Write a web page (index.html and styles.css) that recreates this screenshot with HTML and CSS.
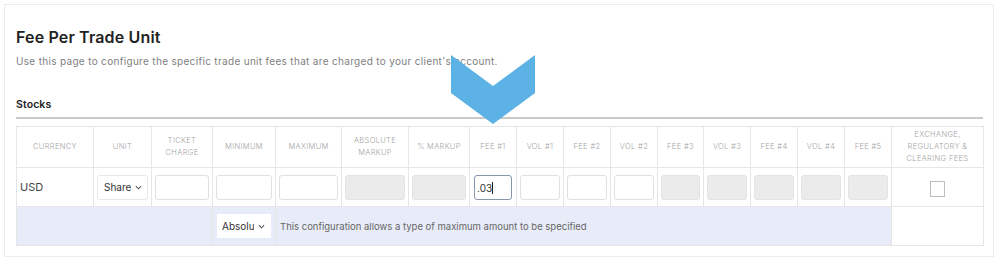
FILE: index.html
```html
<!DOCTYPE html>
<html lang="en">
<head>
<meta charset="UTF-8" />
<meta name="viewport" content="width=device-width, initial-scale=1" />
<title>Fee Per Trade Unit</title>
<link rel="stylesheet" href="styles.css">
</head>
<body>

<div class="card">
  <h1 class="page-title">Fee Per Trade Unit</h1>
  <p class="page-desc">Use this page to configure the specific trade unit fees that are charged to your client's account.</p>

  <h2 class="section-title">Stocks</h2>

  <table class="fee-table">
    <colgroup>
      <col style="width:77px"><col style="width:58px"><col style="width:61px"><col style="width:63px">
      <col style="width:66px"><col style="width:67px"><col style="width:61px"><col style="width:47px">
      <col style="width:47px"><col style="width:47px"><col style="width:47px"><col style="width:46px">
      <col style="width:47px"><col style="width:47px"><col style="width:47px"><col style="width:47px">
      <col style="width:92px">
    </colgroup>
    <thead>
      <tr>
        <th>Currency</th>
        <th>Unit</th>
        <th>Ticket<br>Charge</th>
        <th>Minimum</th>
        <th>Maximum</th>
        <th>Absolute<br>Markup</th>
        <th>% Markup</th>
        <th>Fee #1</th>
        <th>Vol #1</th>
        <th>Fee #2</th>
        <th>Vol #2</th>
        <th>Fee #3</th>
        <th>Vol #3</th>
        <th>Fee #4</th>
        <th>Vol #4</th>
        <th>Fee #5</th>
        <th>Exchange,<br>Regulatory &amp;<br>Clearing Fees</th>
      </tr>
    </thead>
    <tbody>
      <tr class="fee-row">
        <td class="currency">USD</td>
        <td>
          <div class="select-wrap">
            <select class="field select"><option>Share</option></select>
            <svg class="caret" viewBox="0 0 8 5" width="7" height="5"><path d="M1 1l3 3 3-3" fill="none" stroke="#555" stroke-width="1.2"/></svg>
          </div>
        </td>
        <td><input class="field" type="text"></td>
        <td><input class="field" type="text"></td>
        <td><input class="field" type="text"></td>
        <td><input class="field" type="text" disabled></td>
        <td><input class="field" type="text" disabled></td>
        <td><div class="field focused">.03<span class="cursor"></span></div></td>
        <td><input class="field" type="text"></td>
        <td><input class="field" type="text"></td>
        <td><input class="field" type="text"></td>
        <td><input class="field" type="text" disabled></td>
        <td><input class="field" type="text" disabled></td>
        <td><input class="field" type="text" disabled></td>
        <td><input class="field" type="text" disabled></td>
        <td><input class="field" type="text" disabled></td>
        <td><span class="checkbox"></span></td>
      </tr>
      <tr class="config-row">
        <td colspan="3"></td>
        <td>
          <div class="select-wrap">
            <select class="field select plain"><option>Absolute</option></select>
            <svg class="caret" viewBox="0 0 8 5" width="7" height="5"><path d="M1 1l3 3 3-3" fill="none" stroke="#555" stroke-width="1.2"/></svg>
          </div>
        </td>
        <td colspan="12" class="config-note">This configuration allows a type of maximum amount to be specified</td>
        <td class="config-blank"></td>
      </tr>
    </tbody>
  </table>

  <svg class="pointer" viewBox="0 0 84 69" width="84" height="69">
    <polygon points="0,0 42,31 84,0 84,38 42,69 0,38" fill="#5cb2e5"/>
  </svg>
</div>

</body>
</html>
```

FILE: styles.css
```css
* { box-sizing: border-box; margin: 0; padding: 0; }
body {
  background: #fff;
  color: #333;
  font-family: Inter, "Noto Sans", sans-serif;
}
.card {
  position: relative;
  margin: 4px 6px 0 4px;
  border: 1px solid #ececec;
  padding: 0 10px 10px 11px;
}
.page-title {
  margin-top: 22px;
  font-size: 16px;
  line-height: 20px;
  font-weight: 600;
  letter-spacing: 0.15px;
  color: #222;
}
.page-desc {
  margin-top: 7px;
  font-size: 10px;
  line-height: 14px;
  letter-spacing: 0.32px;
  color: #808080;
}
.section-title {
  margin-top: 30px;
  padding-bottom: 5px;
  border-bottom: 2px solid #c9c9c9;
  font-size: 10.5px;
  line-height: 14px;
  font-weight: 600;
  letter-spacing: 0.1px;
  color: #222;
}

.fee-table {
  margin-top: 7px;
  width: 967px;
  table-layout: fixed;
  border-collapse: collapse;
  border: 1px solid #e2e2e2;
}
.fee-table th,
.fee-table td {
  border: 1px solid #e6e6e6;
}
.fee-table th {
  height: 41px;
  font-size: 7.5px;
  line-height: 12.3px;
  font-weight: 300;
  letter-spacing: 0.35px;
  text-transform: uppercase;
  color: #a3a3a3;
  text-align: center;
  vertical-align: middle;
}
.fee-row td {
  height: 39px;
  text-align: center;
  vertical-align: middle;
  padding: 0 3px;
}
.fee-row td.currency {
  text-align: left;
  padding-left: 3px;
  font-size: 11px;
  color: #444;
}

.field {
  display: block;
  width: 100%;
  height: 25px;
  border: 1px solid #e0e0e0;
  border-radius: 3px;
  background: #fff;
  font-family: inherit;
  font-size: 10px;
  color: #333;
  outline: none;
}
.field:disabled {
  background: #ebebeb;
  border-color: #e3e3e3;
}
.field.focused {
  margin: 0 1px;
  width: calc(100% - 2px);
  border-color: #8896ab;
  text-align: left;
  padding: 5px 0 0 2px;
  line-height: 14px;
  font-size: 10px;
  color: #333;
}
.cursor {
  display: inline-block;
  width: 1px;
  height: 12px;
  vertical-align: -2px;
  background: #222;
}

.select-wrap {
  position: relative;
}
.select {
  appearance: none;
  -webkit-appearance: none;
  padding: 0 16px 0 6px;
  text-align: left;
  border-color: #e8e8e8;
}
.select.plain {
  height: 24px;
  padding-left: 4px;
  border-color: #fff;
  border-radius: 0;
}
.caret {
  position: absolute;
  right: 6px;
  top: 10px;
  pointer-events: none;
}

.checkbox {
  display: inline-block;
  width: 15px;
  height: 16px;
  border: 1px solid #bdbdbd;
  vertical-align: middle;
}

.config-row td {
  height: 39px;
  background: #e8ecf8;
  vertical-align: middle;
}
.config-row td:nth-child(2) {
  padding: 0 4px;
}
.config-row .config-note {
  padding-left: 4px;
  font-size: 9.5px;
  color: #666;
}
.config-row .config-blank {
  background: #fff;
}

.pointer {
  position: absolute;
  left: 446px;
  top: 50px;
}
```
